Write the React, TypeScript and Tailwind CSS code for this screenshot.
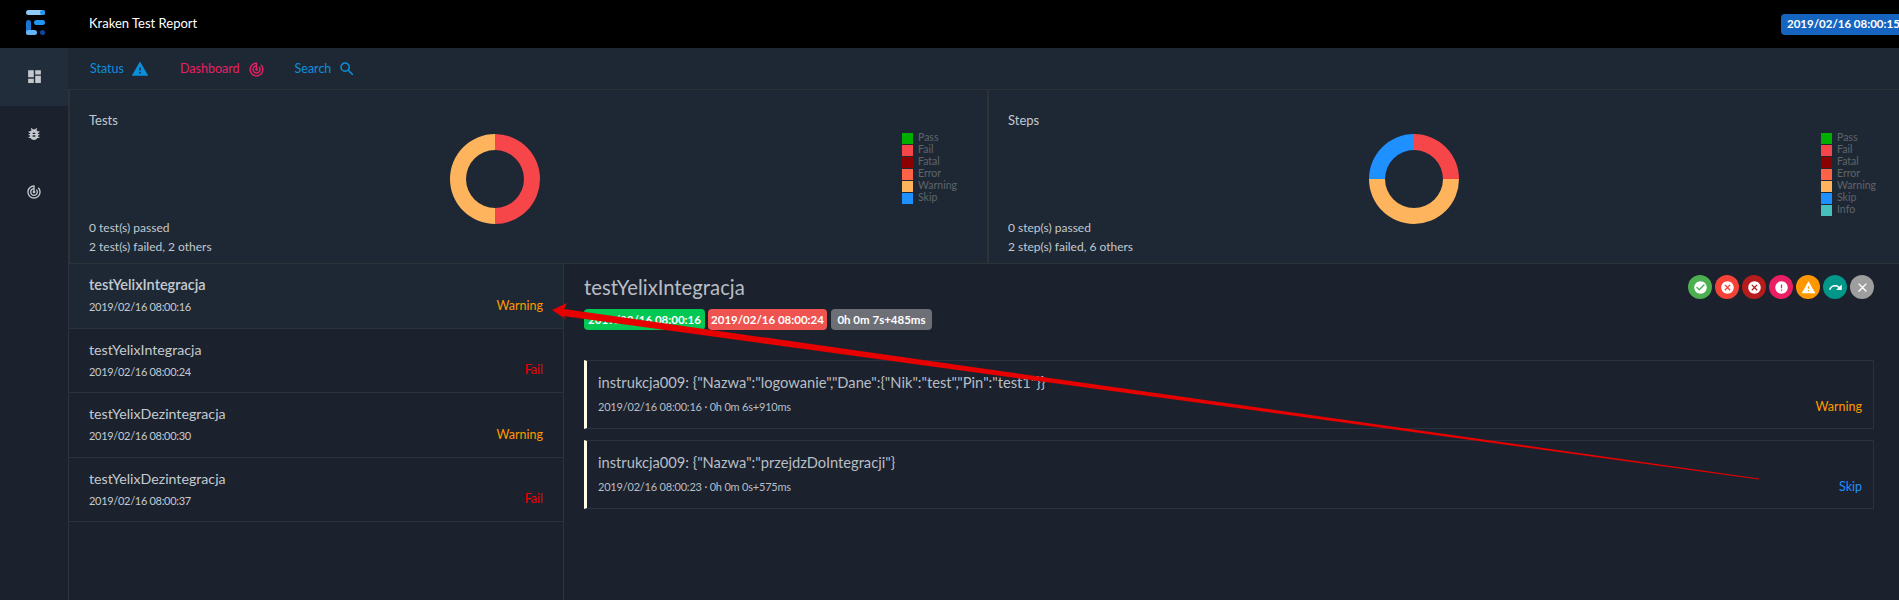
import { MdDashboard, MdBugReport, MdTrackChanges, MdWarning, MdSearch, MdCheckCircle, MdCancel, MdError, MdRedo, MdClear } from "react-icons/md";

type Slice = { pct: number; color: string };

const legendColors: Record<string, string> = {
  Pass: "bg-[#00af00]",
  Fail: "bg-[#f7464a]",
  Fatal: "bg-[#8b0000]",
  Error: "bg-[#ff6347]",
  Warning: "bg-[#fdb45c]",
  Skip: "bg-[#1e90ff]",
  Info: "bg-[#46bfbd]",
};

const tests = [
  { name: "testYelixIntegracja", time: "2019/02/16 08:00:16", status: "Warning", active: true },
  { name: "testYelixIntegracja", time: "2019/02/16 08:00:24", status: "Fail" },
  { name: "testYelixDezintegracja", time: "2019/02/16 08:00:30", status: "Warning" },
  { name: "testYelixDezintegracja", time: "2019/02/16 08:00:37", status: "Fail" },
];

const steps = [
  {
    name: '{"Nazwa":"logowanie","Dane":{"Nik":"test","Pin":"test1"}}',
    meta: "2019/02/16 08:00:16 · 0h 0m 6s+910ms",
    status: "Warning",
    color: "text-[#ff9800]",
  },
  {
    name: '{"Nazwa":"przejdzDoIntegracji"}',
    meta: "2019/02/16 08:00:23 · 0h 0m 0s+575ms",
    status: "Skip",
    color: "text-[#1e90ff]",
  },
];

const filters = [
  { Icon: MdCheckCircle, bg: "bg-[#4caf50]" },
  { Icon: MdCancel, bg: "bg-[#f44336]" },
  { Icon: MdCancel, bg: "bg-[#b71c1c]" },
  { Icon: MdError, bg: "bg-[#e91e63]" },
  { Icon: MdWarning, bg: "bg-[#ff9800]" },
  { Icon: MdRedo, bg: "bg-[#009688]" },
  { Icon: MdClear, bg: "bg-[#9e9e9e]" },
];

const point = (pct: number, r: number) => {
  const a = (pct / 100) * Math.PI * 2;
  return `${45 + r * Math.sin(a)} ${45 - r * Math.cos(a)}`;
};

const Donut = ({ slices }: { slices: Slice[] }) => {
  let start = 0;
  return (
    <svg width="90" height="90" viewBox="0 0 90 90" className="mt-[44px] shrink-0">
      {slices.map((s) => {
        const end = start + s.pct;
        const large = s.pct > 50 ? 1 : 0;
        const d = `M${point(start, 45)} A45 45 0 ${large} 1 ${point(end, 45)} L${point(end, 29)} A29 29 0 ${large} 0 ${point(start, 29)} Z`;
        start = end;
        return <path key={s.color} d={d} fill={s.color} />;
      })}
    </svg>
  );
};

const StatPanel = ({ title, line1, line2, slices, legend, border }: { title: string; line1: string; line2: string; slices: Slice[]; legend: string[]; border?: boolean }) => (
  <div className={`flex pl-[19px] ${border ? "border-r-2 border-[#2c3238]" : ""}`}>
    <div className="flex w-[361px] shrink-0 flex-col justify-between pt-[21px] pb-[7px] text-[13px] leading-[19px] text-[#c3c8cf]">
      <div>{title}</div>
      <div className="text-[12px] leading-[19px]">
        <div>{line1}</div>
        <div>{line2}</div>
      </div>
    </div>
    <Donut slices={slices} />
    <div className="ml-[362px] mt-[42px]">
      {legend.map((l) => (
        <div key={l} className="flex h-3 items-center gap-[5px] text-[10.5px] text-[#5f6468]">
          <span className={`h-[11px] w-[11px] ${legendColors[l]}`} />
          {l}
        </div>
      ))}
    </div>
  </div>
);

const App = () => {
  return (
    <div className="relative flex h-[600px] w-[1899px] flex-col overflow-hidden bg-[#1b222e] font-['Lato','Liberation_Sans',sans-serif]">
      {/* header */}
      <header className="flex h-12 shrink-0 items-center bg-black">
        <div className="mb-[3px] flex w-[89px] shrink-0 justify-start pl-[26px]">
          <svg width="19" height="25" viewBox="0 0 19 25">
            <rect x="0" y="0" width="19" height="5" rx="2.5" fill="#90caf9" />
            <rect x="14" y="0" width="5" height="5" rx="2.5" fill="#2196f3" />
            <rect x="0" y="10" width="5" height="15" rx="2.5" fill="#1976d2" />
            <rect x="8" y="10" width="11" height="5" rx="2.5" fill="#2196f3" />
            <rect x="0" y="20" width="11" height="5" rx="2.5" fill="#64b5f6" />
            <circle cx="16.5" cy="22.5" r="2.5" fill="#0d47a1" />
          </svg>
        </div>
        <span className="text-[13px] text-white">Kraken Test Report</span>
        <span className="ml-auto flex h-[21px] w-[118px] items-center rounded-l-[4px] bg-[#1565c0] pl-[6px] text-[11.5px] font-bold whitespace-nowrap text-white">2019/02/16 08:00:15</span>
      </header>

      <div className="flex flex-1">
        {/* sidebar */}
        <aside className="w-[68px] shrink-0 text-[#c4c7cc]">
          <div className="flex h-[58px] items-center justify-center bg-[#222d3c] pb-[2px]">
            <MdDashboard size={17} />
          </div>
          <div className="flex h-[58px] items-center justify-center pb-[2px]">
            <MdBugReport size={16} />
          </div>
          <div className="flex h-[58px] items-center justify-center pb-[2px]">
            <MdTrackChanges size={16} />
          </div>
        </aside>

        <main className="flex min-w-0 flex-1 flex-col">
          {/* sub nav */}
          <nav className="flex h-[41px] shrink-0 items-center bg-[#1e2835] pt-[1px] pl-[22px] text-[12.5px]">
            <span className="text-[#0b8fdc]">Status</span>
            <MdWarning size={18} className="ml-[7px] text-[#0b8fdc]" />
            <span className="ml-[31px] text-[#e91e63]">Dashboard</span>
            <MdTrackChanges size={17} className="ml-[8px] text-[#e91e63]" />
            <span className="ml-[30px] text-[#0b8fdc]">Search</span>
            <MdSearch size={18} className="ml-[7px] text-[#0b8fdc]" />
          </nav>

          {/* stats */}
          <section className="grid h-[175px] shrink-0 grid-cols-[919px_1fr] border-y border-l-2 border-[#2c3238] bg-[#1e2835]">
            <StatPanel
              title="Tests"
              line1="0 test(s) passed"
              line2="2 test(s) failed, 2 others"
              slices={[
                { pct: 50, color: "#f7464a" },
                { pct: 50, color: "#fdb45c" },
              ]}
              legend={["Pass", "Fail", "Fatal", "Error", "Warning", "Skip"]}
              border
            />
            <StatPanel
              title="Steps"
              line1="0 step(s) passed"
              line2="2 step(s) failed, 6 others"
              slices={[
                { pct: 25, color: "#f7464a" },
                { pct: 50, color: "#fdb45c" },
                { pct: 25, color: "#1e90ff" },
              ]}
              legend={["Pass", "Fail", "Fatal", "Error", "Warning", "Skip", "Info"]}
            />
          </section>

          <section className="flex flex-1">
            {/* test list */}
            <div className="w-[496px] shrink-0 border-x border-[#2c3440]">
              {tests.map((t, i) => (
                <div key={i} className={`flex h-[64.5px] flex-col justify-center border-b border-[#2a3240] pr-5 pl-5 ${t.active ? "bg-[#1e2835]" : ""}`}>
                  <div className={`mt-[1px] leading-[20px] text-[#c6cad0] ${t.active ? "text-[14.5px] font-semibold" : "text-[14.2px]"}`}>{t.name}</div>
                  <div className="mt-[2px] flex items-center justify-between text-[11px] leading-[20px] tracking-[-0.3px] text-[#c6cad0]">
                    {t.time}
                    <span className={`-mt-[3px] text-[12.5px] tracking-normal ${t.status === "Fail" ? "text-[#f00000]" : "text-[#ff9800]"}`}>{t.status}</span>
                  </div>
                </div>
              ))}
            </div>

            {/* test detail */}
            <div className="min-w-0 flex-1 pt-[9px] pr-[25px] pl-5">
              <div className="flex items-start justify-between">
                <h2 className="text-[20.3px] leading-[28px] text-[#b9bdc4]">testYelixIntegracja</h2>
                <div className="mt-[2px] flex gap-[3px]">
                  {filters.map(({ Icon, bg }, i) => (
                    <span key={i} className={`flex h-6 w-6 items-center justify-center rounded-full text-white ${bg}`}>
                      <Icon size={15} />
                    </span>
                  ))}
                </div>
              </div>
              <div className="mt-[8px] flex gap-[3px] text-[11.5px] font-bold text-white">
                <span className="flex h-[21px] w-[121px] items-center justify-center rounded-[4px] bg-[#00c853] whitespace-nowrap">2019/02/16 08:00:16</span>
                <span className="flex h-[21px] w-[119px] items-center justify-center rounded-[4px] bg-[#ef5350] whitespace-nowrap">2019/02/16 08:00:24</span>
                <span className="ml-[1px] flex h-[21px] w-[101px] items-center justify-center rounded-[4px] bg-[#6c6f75] whitespace-nowrap">0h 0m 7s+485ms</span>
              </div>
              <div className="mt-[30px] flex flex-col gap-[11px]">
                {steps.map((s) => (
                  <div key={s.meta} className="h-[69px] border border-l-[3px] border-[#2a3240] border-l-[#fffde7] pt-[10px] pr-[11px] pl-[11px]">
                    <div className="text-[14.7px] leading-[22px] text-[#b9bdc4]">instrukcja009: {s.name}</div>
                    <div className="mt-[4px] flex items-center justify-between text-[11px] leading-[20px] tracking-[-0.2px] text-[#b9bdc4]">
                      {s.meta}
                      <span className={`text-[12.5px] tracking-normal ${s.color}`}>{s.status}</span>
                    </div>
                  </div>
                ))}
              </div>
            </div>
          </section>
        </main>
      </div>

      {/* annotation arrow drawn over the screenshot */}
      <svg className="pointer-events-none absolute inset-0" width="1899" height="600" viewBox="0 0 1899 600">
        <polygon points="552,310 567,303 564,309 1759,478.6 1759,479.4 563,316 567,320" fill="#e60000" />
      </svg>
    </div>
  );
};

export default App;
